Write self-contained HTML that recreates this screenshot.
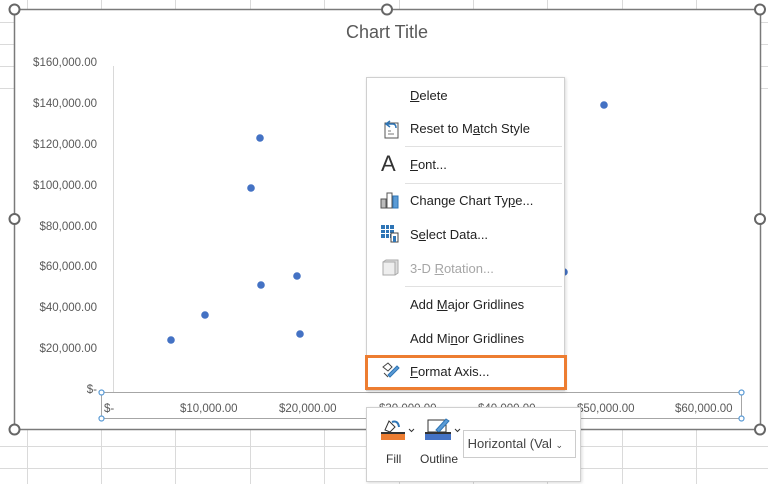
<!DOCTYPE html>
<html><head><meta charset="utf-8"><style>
html,body{margin:0;padding:0;width:768px;height:484px;overflow:hidden;background:#fff;font-family:"Liberation Sans",sans-serif}
.abs{position:absolute}
.menu{position:absolute;left:366px;top:77px;width:197px;height:312px;background:#fff;border:1px solid #d0d0d0;box-shadow:1px 1px 3px rgba(0,0,0,.15)}
.it{position:absolute;left:43px;font-size:13px;color:#222;white-space:nowrap}
.sep{position:absolute;left:38px;right:2px;height:1px;background:#e1e1e1}
.yl{position:absolute;right:671px;font-size:11.5px;color:#595959;white-space:nowrap}
.xl{position:absolute;top:403px;font-size:11.5px;color:#595959;white-space:nowrap}
u{text-decoration:underline}
</style></head><body>
<svg class="abs" style="left:0;top:0" width="768" height="484">
<g stroke="#dadada" stroke-width="1">
<line x1="27.5" y1="0" x2="27.5" y2="484"/><line x1="101.5" y1="0" x2="101.5" y2="484"/><line x1="175.5" y1="0" x2="175.5" y2="484"/><line x1="250.5" y1="0" x2="250.5" y2="484"/><line x1="324.5" y1="0" x2="324.5" y2="484"/><line x1="399.5" y1="0" x2="399.5" y2="484"/><line x1="473.5" y1="0" x2="473.5" y2="484"/><line x1="547.5" y1="0" x2="547.5" y2="484"/><line x1="622.5" y1="0" x2="622.5" y2="484"/><line x1="696.5" y1="0" x2="696.5" y2="484"/>
<line x1="0" y1="22.5" x2="768" y2="22.5"/><line x1="0" y1="44.5" x2="768" y2="44.5"/><line x1="0" y1="66.5" x2="768" y2="66.5"/><line x1="0" y1="88.5" x2="768" y2="88.5"/><line x1="0" y1="446.5" x2="768" y2="446.5"/><line x1="0" y1="468.5" x2="768" y2="468.5"/>
</g>
<rect x="14.5" y="9.5" width="746" height="420" fill="#fff" stroke="#7a7a7a" stroke-width="1.5"/>
<line x1="113.5" y1="66" x2="113.5" y2="392" stroke="#d9d9d9"/>
<rect x="101.5" y="392.5" width="640" height="26" fill="none" stroke="#a6a6a6"/>
<g fill="#fff" stroke="#5b9bd5" stroke-width="1.2"><circle cx="101.5" cy="392.5" r="2.5"/><circle cx="101.5" cy="418.5" r="2.5"/><circle cx="741.5" cy="392.5" r="2.5"/><circle cx="741.5" cy="418.5" r="2.5"/></g>
<g fill="#4472c4"><circle cx="171" cy="340" r="3.8"/><circle cx="205" cy="315" r="3.8"/><circle cx="251" cy="188" r="3.8"/><circle cx="260" cy="138" r="3.8"/><circle cx="261" cy="285" r="3.8"/><circle cx="297" cy="276" r="3.8"/><circle cx="300" cy="334" r="3.8"/><circle cx="604" cy="105" r="3.8"/><circle cx="564" cy="272" r="3.8"/></g>
<g fill="#fff" stroke="#666" stroke-width="2"><circle cx="14.5" cy="9.5" r="5"/><circle cx="387" cy="9.5" r="5"/><circle cx="760" cy="9.5" r="5"/><circle cx="14.5" cy="219" r="5"/><circle cx="760" cy="219" r="5"/><circle cx="14.5" cy="429.5" r="5"/><circle cx="387" cy="429.5" r="5"/><circle cx="760" cy="429.5" r="5"/></g>
</svg>
<div class="abs" style="left:287px;top:22px;width:200px;text-align:center;font-size:18px;color:#595959">Chart Title</div>
<div class="yl" style="top:57px">$160,000.00</div>
<div class="yl" style="top:98px">$140,000.00</div>
<div class="yl" style="top:139px">$120,000.00</div>
<div class="yl" style="top:180px">$100,000.00</div>
<div class="yl" style="top:221px">$80,000.00</div>
<div class="yl" style="top:261px">$60,000.00</div>
<div class="yl" style="top:302px">$40,000.00</div>
<div class="yl" style="top:343px">$20,000.00</div>
<div class="yl" style="top:384px">$-</div>
<div class="xl" style="left:104px">$-</div>
<div class="xl" style="left:180px">$10,000.00</div>
<div class="xl" style="left:279px">$20,000.00</div>
<div class="xl" style="left:379px">$30,000.00</div>
<div class="xl" style="left:478px">$40,000.00</div>
<div class="xl" style="left:577px">$50,000.00</div>
<div class="xl" style="left:675px">$60,000.00</div>

<div class="menu">
<div class="it" style="top:10px"><u>D</u>elete</div>
<svg class="abs" style="left:14px;top:40px" width="20" height="22"><rect x="4" y="5" width="13" height="15" fill="#fff" stroke="#555"/><path d="M9 3 L5 6 L9 9 M5 6 H12 Q15 6 15 10" fill="none" stroke="#2e75b6" stroke-width="1.5"/><path d="M7 13h3M7 16h6" stroke="#777"/></svg>
<div class="it" style="top:43px">Reset to M<u>a</u>tch Style</div>
<div class="sep" style="top:68px"></div>
<div class="abs" style="left:14px;top:73px;font-size:22px;color:#333">A</div>
<div class="it" style="top:79px"><u>F</u>ont...</div>
<div class="sep" style="top:105px"></div>
<svg class="abs" style="left:13px;top:112px" width="20" height="20"><rect x="1" y="9" width="5" height="9" fill="#bbb" stroke="#555"/><rect x="7" y="3" width="5" height="15" fill="#fff" stroke="#555"/><rect x="13" y="6" width="5" height="12" fill="#5b9bd5" stroke="#2e75b6"/></svg>
<div class="it" style="top:115px">Change Chart Ty<u>p</u>e...</div>
<svg class="abs" style="left:13px;top:146px" width="20" height="20"><rect x="1" y="1" width="13" height="13" fill="#2e75b6"/><path d="M1 5.5h13M1 9.5h13M5.5 1v13M9.5 1v13" stroke="#fff"/><rect x="11" y="9" width="7" height="9" fill="#fff" stroke="#444"/><rect x="13" y="12" width="3" height="6" fill="#2e75b6"/></svg>
<div class="it" style="top:149px">S<u>e</u>lect Data...</div>
<svg class="abs" style="left:14px;top:180px" width="20" height="20"><path d="M2 4 L5 2 H17 V15 L14 17 H2 Z" fill="#ddd" stroke="#aaa"/><rect x="2" y="4" width="12" height="13" fill="#eee" stroke="#aaa"/></svg>
<div class="it" style="top:183px;color:#a6a6a6">3-D <u>R</u>otation...</div>
<div class="sep" style="top:208px"></div>
<div class="it" style="top:219px">Add <u>M</u>ajor Gridlines</div>
<div class="it" style="top:253px">Add Mi<u>n</u>or Gridlines</div>
</div>
<div class="abs" style="left:365px;top:355px;width:196px;height:29px;border:3px solid #ed7d31"></div>
<svg class="abs" style="left:380px;top:361px" width="22" height="20"><path d="M3 6 L8 2 L12 6 L8 10 Z" fill="#fff" stroke="#444"/><path d="M8 14 L17 5 L19 7 L10 16 Z" fill="#5b9bd5" stroke="#2e75b6"/><path d="M4 12 L8 16" stroke="#444"/></svg>
<div class="it" style="left:410px;top:364px"><u>F</u>ormat Axis...</div>

<div class="abs" style="left:366px;top:407px;width:213px;height:73px;background:#fff;border:1px solid #d0d0d0;box-shadow:1px 1px 3px rgba(0,0,0,.15)"></div>
<svg class="abs" style="left:378px;top:415px" width="90" height="28">
<path d="M7 15 L11 6 L17 12 L12 17 Z" fill="#fff" stroke="#333"/><path d="M14 7 Q20 5 21 12" fill="none" stroke="#2e75b6" stroke-width="2"/>
<rect x="3" y="17" width="24" height="2" fill="#333"/><rect x="3" y="19" width="24" height="6" fill="#ed7d31"/>
<path d="M31 14 l2.5 2.5 l2.5 -2.5" fill="none" stroke="#333"/>
<rect x="50" y="5" width="18" height="12" fill="#fff" stroke="#333"/><path d="M58 15 L68 4 L71 6 L61 17 Z" fill="#5b9bd5" stroke="#2e75b6"/>
<rect x="47" y="17" width="26" height="2" fill="#333"/><rect x="47" y="19" width="26" height="6" fill="#4472c4"/>
<path d="M77 14 l2.5 2.5 l2.5 -2.5" fill="none" stroke="#333"/>
</svg>
<div class="abs" style="left:386px;top:452px;font-size:12px;color:#333">Fill</div>
<div class="abs" style="left:420px;top:452px;font-size:12px;color:#333">Outline</div>
<div class="abs" style="left:463px;top:430px;width:111px;height:26px;border:1px solid #ccc;background:#fff;font-size:13px;color:#444;line-height:26px;white-space:nowrap;overflow:hidden">&nbsp;Horizontal (Val <span style="font-size:9px">&#8964;</span></div>
</body></html>
